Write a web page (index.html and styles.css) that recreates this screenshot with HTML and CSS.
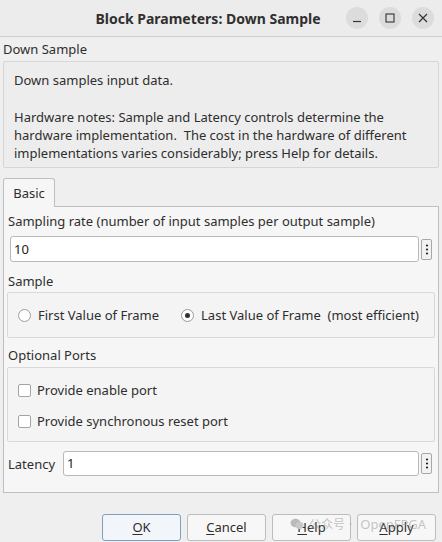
FILE: index.html
```html
<!DOCTYPE html>
<html>
<head>
<meta charset="utf-8">
<link rel="stylesheet" href="styles.css">
</head>
<body>
<div class="window">
  <div class="titlebar">
    <div class="title">Block Parameters: Down Sample</div>
    <div class="wbtns">
      <div class="wbtn"><svg width="10" height="10" viewBox="0 0 10 10"><path d="M1 8.5h8" stroke="#333" stroke-width="1.2"/></svg></div>
      <div class="wbtn"><svg width="10" height="10" viewBox="0 0 10 10"><rect x="1" y="1" width="8" height="8" fill="none" stroke="#333" stroke-width="1.1"/></svg></div>
      <div class="wbtn"><svg width="10" height="10" viewBox="0 0 10 10"><path d="M1 1L9 9M9 1L1 9" stroke="#333" stroke-width="1.2"/></svg></div>
    </div>
  </div>
  <div class="content">
    <div class="blockname">Down Sample</div>
    <div class="desc">
      <p>Down samples input data.</p>
      <p class="blank">&nbsp;</p>
      <p>Hardware notes: Sample and Latency controls determine the hardware implementation.&nbsp; The cost in the hardware of different implementations varies considerably; press Help for details.</p>
    </div>
    <div class="tabs"><div class="tab">Basic</div></div>
    <div class="panel">
      <div class="lbl">Sampling rate (number of input samples per output sample)</div>
      <div class="field-row first">
        <div class="input">10</div>
        <div class="kebab"><svg width="4" height="13" viewBox="0 0 4 13"><circle cx="2" cy="2.5" r="1.1" fill="#222"/><circle cx="2" cy="6.5" r="1.1" fill="#222"/><circle cx="2" cy="10.5" r="1.1" fill="#222"/></svg></div>
      </div>
      <div class="lbl group-lbl">Sample</div>
      <div class="group radios">
        <div class="opt"><span class="radio"></span>First Value of Frame</div>
        <div class="opt"><span class="radio on"></span>Last Value of Frame&nbsp; (most efficient)</div>
      </div>
      <div class="lbl group-lbl ports">Optional Ports</div>
      <div class="group checks">
        <div class="opt"><span class="check"></span>Provide enable port</div>
        <div class="opt"><span class="check"></span>Provide synchronous reset port</div>
      </div>
      <div class="field-row latency">
        <div class="lat-lbl">Latency</div>
        <div class="input">1</div>
        <div class="kebab"><svg width="4" height="13" viewBox="0 0 4 13"><circle cx="2" cy="2.5" r="1.1" fill="#222"/><circle cx="2" cy="6.5" r="1.1" fill="#222"/><circle cx="2" cy="10.5" r="1.1" fill="#222"/></svg></div>
      </div>
    </div>
    <div class="buttons">
      <div class="btn default"><u>O</u>K</div>
      <div class="btn"><u>C</u>ancel</div>
      <div class="btn"><u>H</u>elp</div>
      <div class="btn"><u>A</u>pply</div>
    </div>
  </div>
  <div class="watermark"><svg width="14" height="12" viewBox="0 0 14 12"><ellipse cx="5.5" cy="5" rx="5" ry="4.2" fill="#bbb"/><ellipse cx="9.5" cy="7.5" rx="4" ry="3.4" fill="#c8c8c8"/></svg><span class="wm1">公众号</span><span class="wm2">·</span><span class="wm3">OpenFPGA</span></div>
</div>
</body>
</html>
```
FILE: styles.css
```css
html, body {
  margin: 0;
  padding: 0;
}
body {
  background: #efefef;
  font-family: "Noto Sans", "Open Sans", "Noto Sans CJK SC", sans-serif;
  font-size: 13px;
  color: #2e2e2e;
  width: 442px;
  height: 542px;
  overflow: hidden;
}
.window {
  position: relative;
  width: 442px;
  height: 542px;
}
.titlebar {
  height: 36px;
  display: flex;
  align-items: center;
  background: #ececec;
  border-bottom: 1px solid #cdcdcd;
}
.title {
  flex: 1;
  text-align: center;
  padding-left: 70px;
  font-weight: bold;
  font-size: 14px;
  color: #303030;
}
.wbtns {
  display: flex;
  gap: 11px;
  margin-right: 8px;
}
.wbtn {
  width: 22px;
  height: 22px;
  border-radius: 50%;
  background: #dcdcdc;
  display: flex;
  align-items: center;
  justify-content: center;
}
.content {
  padding: 0 3px;
}
.blockname {
  margin-top: 3px;
  line-height: 18px;
}
.desc {
  margin-top: 3px;
  border: 1px solid #d6d6d6;
  border-radius: 2px;
  background: #ededed;
  padding: 9px 10px 5px 10px;
  line-height: 18.3px;
}
.desc p {
  margin: 0;
}
.tabs {
  margin-top: 9px;
  display: flex;
}
.tab {
  width: 52px;
  height: 29px;
  box-sizing: border-box;
  border: 1px solid #bfbfbf;
  border-bottom: none;
  border-radius: 3px 3px 0 0;
  background: #f6f6f6;
  text-align: center;
  line-height: 28px;
  position: relative;
  top: 1px;
}
.panel {
  border: 1px solid #bfbfbf;
  background: #f6f6f6;
  padding: 5px 3px 16px 3px;
}
.lbl {
  line-height: 18px;
  padding-left: 1px;
}
.field-row {
  display: flex;
  align-items: center;
  gap: 2px;
  margin-right: 3px;
}
.field-row.first {
  margin-top: 6px;
  margin-left: 3px;
}
.input {
  flex: 1;
  height: 26px;
  box-sizing: border-box;
  border: 1px solid #b9b9b9;
  border-radius: 3px;
  background: #ffffff;
  line-height: 24px;
  padding-left: 3px;
  color: #222;
}
.kebab {
  width: 11px;
  height: 21px;
  box-sizing: border-box;
  border: 1px solid #a8a8a8;
  border-radius: 2px;
  background: #f2f2f2;
  display: flex;
  align-items: center;
  justify-content: center;
}
.group-lbl {
  margin-top: 10px;
}
.group-lbl.ports {
  margin-top: 8px;
}
.group {
  border: 1px solid #d9d9d9;
  border-radius: 2px;
  background: #f4f4f4;
}
.radios {
  margin-top: 2px;
  height: 46px;
  box-sizing: border-box;
  display: flex;
  align-items: center;
  padding-left: 10px;
  gap: 22px;
}
.opt {
  display: flex;
  align-items: center;
  line-height: 18px;
}
.radio {
  width: 13px;
  height: 13px;
  box-sizing: border-box;
  border: 1px solid #9c9c9c;
  border-radius: 50%;
  background: #fff;
  margin-right: 7px;
  display: inline-flex;
  align-items: center;
  justify-content: center;
}
.radio.on::after {
  content: "";
  width: 5px;
  height: 5px;
  border-radius: 50%;
  background: #333;
}
.checks {
  margin-top: 3px;
  padding: 13px 0 11px 10px;
  display: flex;
  flex-direction: column;
  gap: 13px;
}
.check {
  width: 13px;
  height: 13px;
  box-sizing: border-box;
  border: 1px solid #a4a4a4;
  border-radius: 2px;
  background: #fff;
  margin-right: 6px;
}
.latency {
  margin-top: 9px;
  margin-left: 1px;
}
.lat-lbl {
  width: 53px;
}
.latency .input {
  height: 25px;
  line-height: 23px;
}
.buttons {
  display: flex;
  justify-content: flex-end;
  gap: 6px;
  margin-top: 21px;
  margin-right: 3px;
}
.btn {
  width: 79px;
  height: 27px;
  box-sizing: border-box;
  border: 1px solid #bcbcbc;
  border-radius: 3px;
  background: #f7f7f7;
  text-align: center;
  line-height: 25px;
  color: #2e2e2e;
}
.btn.default {
  border-color: #7f9fbf;
  background: #f2f6fa;
}
.btn u {
  text-decoration-thickness: 1px;
  text-underline-offset: 2px;
}
.watermark {
  position: absolute;
  left: 290px;
  top: 515px;
  display: flex;
  align-items: center;
  color: rgba(150, 150, 150, 0.55);
  font-size: 12px;
  pointer-events: none;
}
.wm1 {
  margin-left: 5px;
}
.wm2 {
  margin-left: 4px;
}
.wm3 {
  margin-left: 8px;
  font-size: 13px;
}
```
